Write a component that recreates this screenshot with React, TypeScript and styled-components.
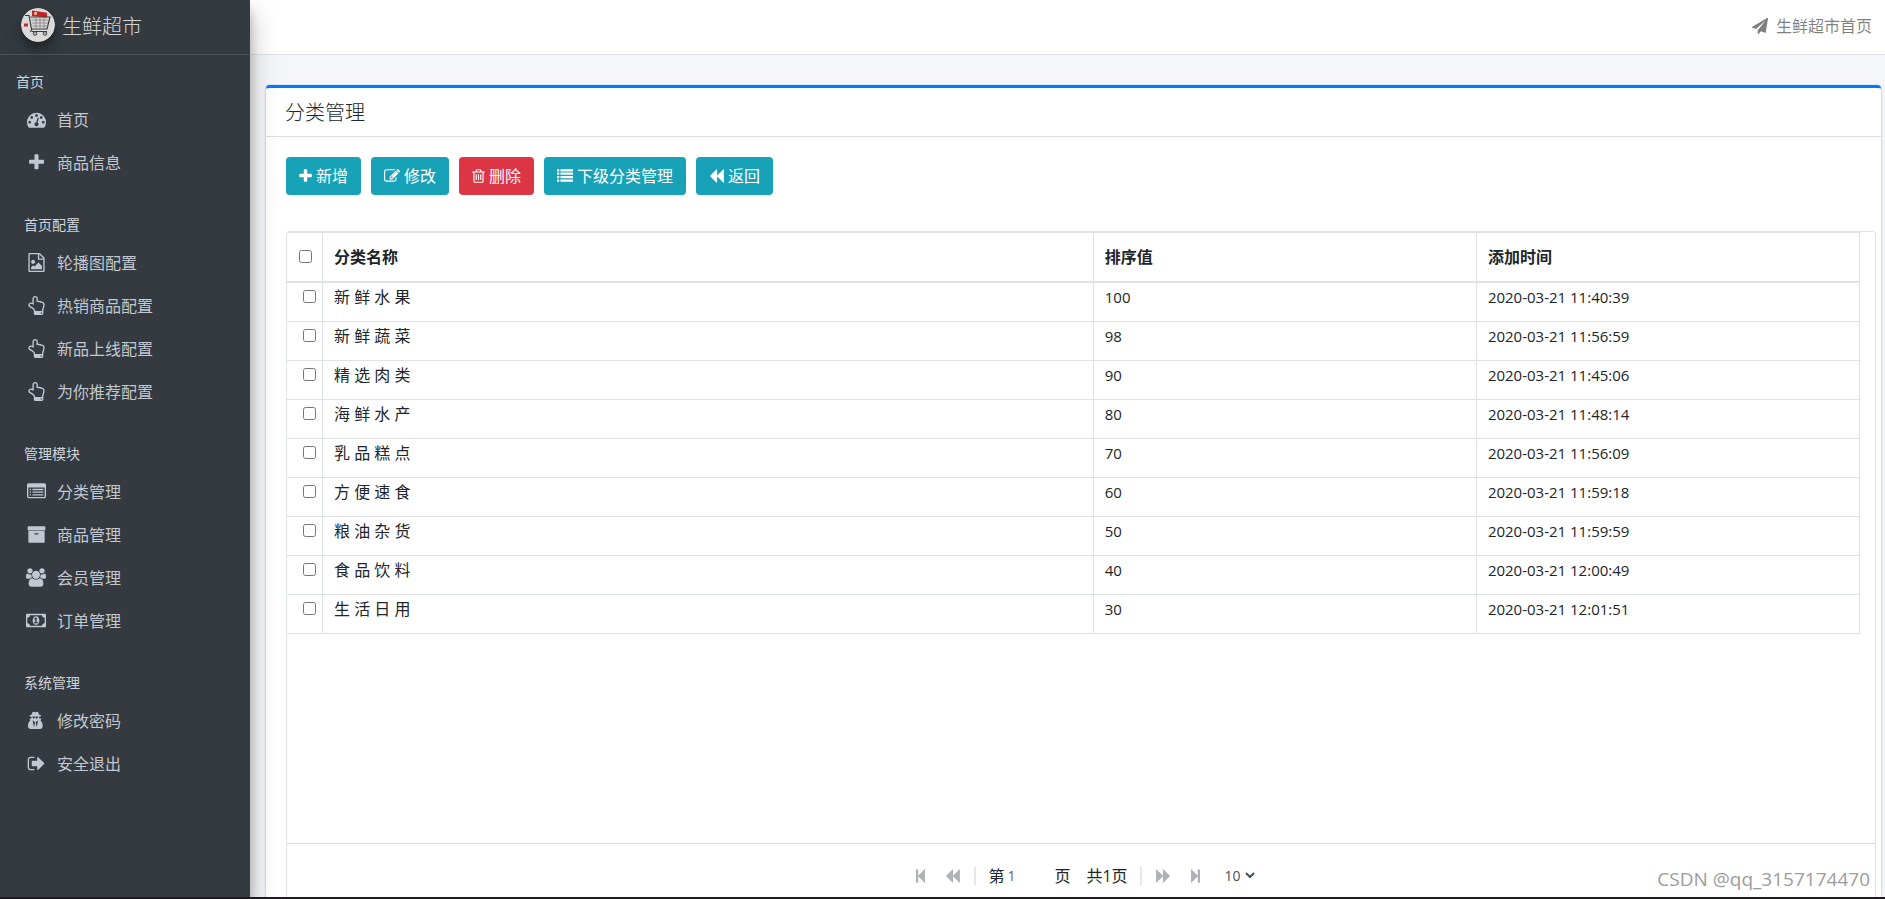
import React from 'react';
import styled, { createGlobalStyle } from 'styled-components';

const GlobalStyle = createGlobalStyle`
  *, *::before, *::after { box-sizing: border-box; }
  body {
    margin: 0;
    font-family: 'Open Sans', 'Noto Sans CJK SC', sans-serif;
    font-size: 16px;
    line-height: 24px;
    color: #212529;
    background: #f4f6f9;
  }
`;

/* ---------- icons ---------- */

type Shape = { w?: number; d: string };

const rows = (x: number, w: number, h: number, ys: number[]) =>
  ys.map((y) => `M${x} ${y}h${w}v${h}h-${w}z`).join('');

const shapes: Record<string, Shape> = {
  dashboard: {
    d: 'M384 1152q0-53-37.5-90.5t-90.5-37.5-90.5 37.5-37.5 90.5 37.5 90.5 90.5 37.5 90.5-37.5 37.5-90.5zm192-448q0-53-37.5-90.5t-90.5-37.5-90.5 37.5-37.5 90.5 37.5 90.5 90.5 37.5 90.5-37.5 37.5-90.5zm428 481l101-382q6-26-7.5-48.5t-38.5-29.5-48 6.5-30 39.5l-101 382q-60 5-107 43.5t-63 98.5q-20 77 20 146t117 89 146-20 89-117q16-60-6-117t-72-91zm660-33q0-53-37.5-90.5t-90.5-37.5-90.5 37.5-37.5 90.5 37.5 90.5 90.5 37.5 90.5-37.5 37.5-90.5zm-640-640q0-53-37.5-90.5t-90.5-37.5-90.5 37.5-37.5 90.5 37.5 90.5 90.5 37.5 90.5-37.5 37.5-90.5zm448 192q0-53-37.5-90.5t-90.5-37.5-90.5 37.5-37.5 90.5 37.5 90.5 90.5 37.5 90.5-37.5 37.5-90.5zm320 448q0 261-141 483-19 29-54 29h-1402q-35 0-54-29-141-221-141-483 0-182 71-348t191-286 286-191 348-71 348 71 286 191 191 286 71 348z',
  },
  plus: {
    w: 1408,
    d: 'M1408 736v192q0 40-28 68t-68 28h-416v416q0 40-28 68t-68 28h-192q-40 0-68-28t-28-68v-416h-416q-40 0-68-28t-28-68v-192q0-40 28-68t68-28h416v-416q0-40 28-68t68-28h192q40 0 68 28t28 68v416h416q40 0 68 28t28 68z',
  },
  fileImage: {
    d: 'M1596 380q28 28 48 76t20 88v1152q0 40-28 68t-68 28h-1344q-40 0-68-28t-28-68v-1600q0-40 28-68t68-28h896q40 0 88 20t76 48zm-444-244v376h376q-10-29-22-41l-313-313q-12-12-41-22zm384 1528v-1024h-416q-40 0-68-28t-28-68v-416h-768v1536h1280zm-128-448v320h-1024v-192l192-192 128 128 384-384zm-832-192q-80 0-136-56t-56-136 56-136 136-56 136 56 56 136-56 136-136 56z',
  },
  hand: {
    d: 'M1408 1600q0-26-19-45t-45-19-45 19-19 45 19 45 45 19 45-19 19-45zm128-764q0-189-167-189-26 0-56 5-16-30-52.5-47.5t-73.5-17.5-69 18q-50-53-119-53-25 0-55.5 10t-47.5 25v-331q0-52-38-90t-90-38q-51 0-89.5 39t-38.5 89v576q-20 0-48.5-15t-55-33-68-33-84.5-15q-67 0-97.5 44.5t-30.5 115.5q0 24 139 90 44 24 65 37 64 40 145 112 81 71 106 101 57 69 57 140v32h640v-32q0-72 32-167t64-193.5 32-179.5zm128-5q0 133-69 322-59 164-59 223v288q0 53-37.5 90.5t-90.5 37.5h-640q-53 0-90.5-37.5t-37.5-90.5v-288q0-10-4.5-21.5t-14-23.5-18-22.5-22.5-24-21.5-20.5-21.5-19-17-14q-74-65-129-100-21-13-62-33t-72-37-63-40.5-49.5-55-17.5-69.5q0-125 67-206.5t189-81.5q68 0 128 22v-374q0-104 77-180t179-76q105 0 181 75.5t76 180.5v169q62 4 119 37 21-3 43-3 101 0 178 60 139-1 219.5 85t80.5 227z',
  },
  listAlt: {
    d:
      rows(256, 128, 128, [640, 896, 1152]) +
      rows(512, 1024, 128, [640, 896, 1152]) +
      'M1664 1376v-832q0-13-9.5-22.5t-22.5-9.5h-1472q-13 0-22.5 9.5t-9.5 22.5v832q0 13 9.5 22.5t22.5 9.5h1472q13 0 22.5-9.5t9.5-22.5zm128-1088v1088q0 66-47 113t-113 47h-1472q-66 0-113-47t-47-113v-1088q0-66 47-113t113-47h1472q66 0 113 47t47 113z',
  },
  archive: {
    d: 'M1088 832q0-26-19-45t-45-19h-256q-26 0-45 19t-19 45 19 45 45 19h256q26 0 45-19t19-45zm576-192v960q0 26-19 45t-45 19h-1408q-26 0-45-19t-19-45v-960q0-26 19-45t45-19h1408q26 0 45 19t19 45zm64-448v256q0 26-19 45t-45 19h-1536q-26 0-45-19t-19-45v-256q0-26 19-45t45-19h1536q26 0 45 19t19 45z',
  },
  users: {
    w: 1920,
    d: 'M593 896q-162 5-265 128h-134q-82 0-138-40.5t-56-118.5q0-353 124-353 6 0 43.5 21t97.5 42.5 119 21.5q67 0 133-23-5 37-5 66 0 139 81 256zm1071 637q0 120-73 189.5t-194 69.5h-874q-121 0-194-69.5t-73-189.5q0-53 3.5-103.5t14-109 26.5-108.5 43-97.5 62-81 85.5-53.5 111.5-20q10 0 43 21.5t73 48 107 48 135 21.5 135-21.5 107-48 73-48 43-21.5q61 0 111.5 20t85.5 53.5 62 81 43 97.5 26.5 108.5 14 109 3.5 103.5zm-1024-1277q0 106-75 181t-181 75-181-75-75-181 75-181 181-75 181 75 75 181zm704 384q0 159-112.5 271.5t-271.5 112.5-271.5-112.5-112.5-271.5 112.5-271.5 271.5-112.5 271.5 112.5 112.5 271.5zm576 225q0 78-56 118.5t-138 40.5h-134q-103-123-265-128 81-117 81-256 0-29-5-66 66 23 133 23 59 0 119-21.5t97.5-42.5 43.5-21q124 0 124 353zm-128-609q0 106-75 181t-181 75-181-75-75-181 75-181 181-75 181 75 75 181z',
  },
  money: {
    w: 1920,
    d: 'M768 1152h384v-96h-128v-448h-114l-148 137 77 80q42-37 55-57h2v288h-128v96zm512-256q0 70-21 142t-59.5 134-101.5 101-138 39-138-39-101.5-101-59.5-134-21-142 21-142 59.5-134 101.5-101 138-39 138 39 101.5 101 59.5 134 21 142zm512 256v-512q-106 0-181-75t-75-181h-1152q0 106-75 181t-181 75v512q106 0 181 75t75 181h1152q0-106 75-181t181-75zm128-832v1152q0 26-19 45t-45 19h-1792q-26 0-45-19t-19-45v-1152q0-26 19-45t45-19h1792q26 0 45 19t19 45z',
  },
  userSecret: {
    w: 1536,
    d: 'M576 1536l96-448-96-128-128-64zM832 1536l128-640-128 64-96 128zM992 526q-2-4-4-6-10-8-96-8-70 0-167 19-7 2-21 2t-21-2q-97-19-167-19-86 0-96 8-2 2-4 6 2 18 4 27 2 3 7.5 6.5t7.5 10.5q2 4 7.5 20.5t7 20.5 7.5 17 8.5 17 9 14 12 13.5 14 9.5 17.5 8 20.5 4 24.5 2q36 0 59-12.5t32.5-30 14.5-34.5 11.5-29.5 17.5-12.5h12q11 0 17.5 12.5t11.5 29.5 14.5 34.5 32.5 30 59 12.5q13 0 24.5-2t20.5-4 17.5-8 14-9.5 12-13.5 9-14 8.5-17 7.5-17 7-20.5 7.5-20.5q2-7 7.5-10.5t7.5-6.5q2-9 4-27zM1408 1459q0 121-73 190t-194 69h-874q-121 0-194-69t-73-190q0-61 4.5-118t19-125.5 37.5-123.5 63.5-103.5 93.5-74.5l-90-220h214q-22-64-22-128 0-12 2-32-194-40-194-96 0-57 210-99 17-62 51.5-134t70.5-114q32-37 76-37 30 0 84 31t84 31 84-31 84-31q44 0 76 37 36 42 70.5 114t51.5 134q210 42 210 99 0 56-194 96 7 81-20 160h214l-82 225q63 33 107.5 96.5t65.5 143.5 29 151.5 8 148.5z',
  },
  signOut: {
    d: 'M704 1440q0 4 1 20t.5 26.5-3 23.5-10 19.5-20.5 6.5h-320q-119 0-203.5-84.5t-84.5-203.5v-704q0-119 84.5-203.5t203.5-84.5h320q13 0 22.5 9.5t9.5 22.5q0 4 1 20t.5 26.5-3 23.5-10 19.5-20.5 6.5h-320q-66 0-113 47t-47 113v704q0 66 47 113t113 47h312l11.5 1 11.5 3 8 5.5 7 9 2 13.5zm928-544q0 26-19 45l-544 544q-19 19-45 19t-45-19-19-45v-288h-448q-26 0-45-19t-19-45v-384q0-26 19-45t45-19h448v-288q0-26 19-45t45-19 45 19l544 544q19 19 19 45z',
  },
  edit: {
    d: 'M888 1184l116-116-152-152-116 116v56h96v96h56zm440-720q-16-16-33 1l-350 350q-17 17-1 33t33-1l350-350q17-17 1-33zm80 594v190q0 119-84.5 203.5t-203.5 84.5h-832q-119 0-203.5-84.5t-84.5-203.5v-832q0-119 84.5-203.5t203.5-84.5h832q63 0 117 25 15 7 18 23 3 17-9 29l-49 49q-14 14-32 8-23-6-45-6h-832q-66 0-113 47t-47 113v832q0 66 47 113t113 47h832q66 0 113-47t47-113v-126q0-13 9-22l64-64q15-15 35-7t20 29zm-96-738l288 288-672 672h-288v-288zm444 132l-92 92-288-288 92-92q28-28 68-28t68 28l152 152q28 28 28 68t-28 68z',
  },
  trash: {
    w: 1408,
    d:
      rows(384, 128, 640, [704]) +
      rows(640, 128, 640, [704]) +
      rows(896, 128, 640, [704]) +
      'M1152 1460v-948h-896v948q0 22 7 40.5t14.5 27 10.5 8.5h832q3 0 10.5-8.5t14.5-27 7-40.5zm-672-1076h448l-48-117q-7-9-17-11h-317q-10 2-17 11zm928 32v64q0 14-9 23t-23 9h-96v948q0 83-47 143.5t-113 60.5h-832q-66 0-113-58.5t-47-141.5v-952h-96q-14 0-23-9t-9-23v-64q0-14 9-23t23-9h309l70-167q15-37 54-63t79-26h320q40 0 79 26t54 63l70 167h309q14 0 23 9t9 23z',
  },
  list: {
    d: rows(0, 256, 256, [128, 512, 896, 1280]) + rows(384, 1408, 256, [128, 512, 896, 1280]),
  },
  backward: {
    w: 1664,
    d: 'M1619 141q19-19 32-13t13 32v1472q0 26-13 32t-32-13l-710-710q-9-9-13-19v710q0 26-13 32t-32-13l-710-710q-19-19-19-45t19-45l710-710q19-19 32-13t13 32v710q4-10 13-19z',
  },
  forward: {
    w: 1664,
    d: 'M45 1651q-19 19-32 13t-13-32v-1472q0-26 13-32t32 13l710 710q9 9 13 19v-710q0-26 13-32t32 13l710 710q19 19 19 45t-19 45l-710 710q-19 19-32 13t-13-32v-710q-4 10-13 19z',
  },
  stepBackward: {
    w: 1024,
    d: 'M979 141q19-19 32-13t13 32v1472q0 26-13 32t-32-13l-710-710q-9-9-13-19v678q0 26-19 45t-45 19h-128q-26 0-45-19t-19-45v-1408q0-26 19-45t45-19h128q26 0 45 19t19 45v678q4-10 13-19z',
  },
  stepForward: {
    w: 1024,
    d: 'M45 1651q-19 19-32 13t-13-32v-1472q0-26 13-32t32 13l710 710q9 9 13 19v-678q0-26 19-45t45-19h128q26 0 45 19t19 45v1408q0 26-19 45t-45 19h-128q-26 0-45-19t-19-45v-678q-4 10-13 19z',
  },
  plane: {
    d: 'M1764 11q33 24 27 64l-256 1536q-5 29-32 45-14 8-31 8-11 0-24-5l-453-185-242 295q-18 23-49 23-13 0-22-4-19-7-30.5-23.5t-11.5-36.5v-349l864-1059-1069 925-395-162q-37-14-40-55-2-40 32-59l1664-960q15-9 32-9 20 0 36 11z',
  },
};

const Glyph = styled.svg`
  display: block;
  flex: none;
  fill: currentColor;
  overflow: visible;
`;

function Icon({ name, size = 16 }: { name: string; size?: number }) {
  const { w = 1792, d } = shapes[name];
  return (
    <Glyph
      width={Math.round((size * w) / 1792)}
      height={size}
      viewBox={`0 0 ${w} 1792`}
      aria-hidden="true"
    >
      <path d={d} />
    </Glyph>
  );
}

/* ---------- shell ---------- */

const Screen = styled.div`
  display: flex;
  flex-direction: column;
  height: 100vh;
  overflow: hidden;
  position: relative;
`;

const Shell = styled.div`
  display: flex;
  flex: 1;
  min-height: 0;
`;

const DesktopEdge = styled.div`
  position: relative;
  z-index: 3;
  flex: none;
  height: 2px;
  background: #1d1b20;
`;

const Sidebar = styled.aside`
  position: relative;
  z-index: 2;
  flex: none;
  width: 250px;
  color: #c2c7d0;
  background: #343a40;
  box-shadow: 0 14px 28px rgba(0, 0, 0, 0.25), 0 10px 10px rgba(0, 0, 0, 0.22);
`;

const Brand = styled.a`
  display: flex;
  align-items: center;
  gap: 7px;
  height: 55px;
  padding: 0 8px 4px 21px;
  border-bottom: 1px solid #4b545c;
  color: rgba(255, 255, 255, 0.8);
  font-size: 20px;
  font-weight: 300;
  text-decoration: none;
`;

const BrandName = styled.span`
  padding-top: 4px;
`;

const Logo = styled.svg`
  display: block;
  flex: none;
  border-radius: 50%;
  box-shadow: 0 10px 20px rgba(0, 0, 0, 0.19), 0 6px 6px rgba(0, 0, 0, 0.23);
`;

const Nav = styled.nav`
  padding-top: 9px;
`;

const NavSection = styled.section`
  margin-bottom: 24px;
`;

const NavHeading = styled.h2<{ $outer?: boolean }>`
  margin: 0;
  padding-left: ${(p) => (p.$outer ? 16 : 24)}px;
  font-size: 14px;
  font-weight: 400;
  line-height: 36px;
  color: #d0d4db;
`;

const NavList = styled.ul`
  margin: 0;
  padding: 0 8px;
  list-style: none;
`;

const NavLink = styled.a`
  display: flex;
  align-items: center;
  gap: 9px;
  height: 40px;
  margin-bottom: 3px;
  padding: 0 16px;
  color: #c2c7d0;
  text-decoration: none;
`;

const NavIcon = styled.span`
  display: flex;
  justify-content: center;
  width: 24px;
  padding-bottom: 2px;
`;

const Main = styled.main`
  display: flex;
  flex: 1;
  flex-direction: column;
  min-width: 0;
`;

const Navbar = styled.header`
  display: flex;
  flex: none;
  align-items: center;
  justify-content: flex-end;
  height: 55px;
  padding: 0 13px 2px;
  background: #fff;
  border-bottom: 1px solid #dee2e6;
`;

const HomeLink = styled.a`
  display: flex;
  align-items: center;
  gap: 8px;
  color: rgba(0, 0, 0, 0.5);
  text-decoration: none;
`;

/* ---------- card ---------- */

const Card = styled.section`
  display: flex;
  flex: 1;
  flex-direction: column;
  min-height: 0;
  margin: 30px 4px 0 16px;
  background: #fff;
  border-top: 3px solid #007bff;
  border-radius: 4px 4px 0 0;
  box-shadow: 0 0 1px rgba(0, 0, 0, 0.4), 0 1px 3px rgba(0, 0, 0, 0.2);
`;

const CardTitle = styled.h1`
  margin: 0;
  padding: 2px 19px 0;
  border-bottom: 1px solid #dfdfdf;
  font-size: 20px;
  font-weight: 300;
  line-height: 46px;
`;

const CardBody = styled.div`
  display: flex;
  flex: 1;
  flex-direction: column;
  gap: 36px;
  min-height: 0;
  padding: 20px 5px 0 20px;
`;

const Toolbar = styled.div`
  display: flex;
  gap: 10px;
`;

const ToolButton = styled.button<{ $danger?: boolean }>`
  display: flex;
  align-items: center;
  gap: 4px;
  height: 38px;
  padding: 0 13px;
  border: 0;
  border-radius: 4px;
  color: #fff;
  background: ${(p) => (p.$danger ? '#dc3545' : '#17a2b8')};
  font: inherit;
  cursor: pointer;
`;

const Grid = styled.div`
  display: flex;
  flex: 1;
  flex-direction: column;
  min-height: 0;
  border: 1px solid #dee2e6;
  border-bottom: 0;
  border-radius: 4px 4px 0 0;
`;

const GridScroll = styled.div`
  flex: 1;
  min-height: 0;
  padding-right: 15px;
  overflow: hidden;
`;

const Table = styled.table`
  width: 100%;
  table-layout: fixed;
  border-collapse: separate;
  border-spacing: 0;
  border-top: 1px solid #dee2e6;
`;

const CheckCol = styled.col`
  width: 36px;
`;

const NameCol = styled.col`
  width: 49%;
`;

const HeadCell = styled.th`
  height: 50px;
  padding: 0 11px;
  border-right: 1px solid #dee2e6;
  border-bottom: 2px solid #dee2e6;
  font-weight: 700;
  text-align: left;
`;

const Cell = styled.td<{ $latin?: boolean }>`
  height: 39px;
  padding: 2px 11px 0;
  border-right: 1px solid #dee2e6;
  border-bottom: 1px solid #dee2e6;
  font-size: ${(p) => (p.$latin ? 15 : 16)}px;
  vertical-align: top;
`;

const HeadCheckCell = styled(HeadCell)`
  padding: 0 0 2px 12px;
`;

const CheckCell = styled(Cell)`
  padding: 7px 0 0 16px;
`;

const Check = styled.input`
  display: block;
  width: 13px;
  height: 13px;
  margin: 0;
`;

/* ---------- pager ---------- */

const Pager = styled.footer`
  display: flex;
  flex: none;
  align-items: center;
  justify-content: center;
  height: 54px;
  padding-top: 10px;
  border-top: 1px solid #d9dbdd;
`;

const PagerButton = styled.button`
  display: flex;
  justify-content: center;
  width: 32px;
  padding: 0;
  border: 0;
  color: #b0b2b4;
  background: none;
`;

const Divider = styled.span<{ $end?: boolean }>`
  width: 2px;
  height: 18px;
  margin: ${(p) => (p.$end ? '0 6px 0 12px' : '0 12px 0 6px')};
  background: #e6e6e6;
`;

const PageLabel = styled.label`
  display: flex;
  align-items: center;
  gap: 3px;
`;

const PageInput = styled.input`
  width: 44px;
  padding: 0;
  border: 0;
  color: #5f6368;
  background: none;
  font: inherit;
  font-size: 14px;
`;

const PageTotal = styled.span`
  margin-left: 16px;
`;

const PageSize = styled.select`
  margin-left: 9px;
  border: 0;
  color: #495057;
  background: none;
  font: inherit;
  font-size: 14px;
`;

const Watermark = styled.div`
  position: absolute;
  right: 15px;
  bottom: 8px;
  z-index: 4;
  color: #9c9c9c;
  font-size: 19px;
  text-shadow: 1px 1px 0 #fff;
  pointer-events: none;
`;

/* ---------- data ---------- */

const menu = [
  {
    title: '首页',
    outer: true,
    items: [
      ['dashboard', '首页'],
      ['plus', '商品信息'],
    ],
  },
  {
    title: '首页配置',
    items: [
      ['fileImage', '轮播图配置'],
      ['hand', '热销商品配置'],
      ['hand', '新品上线配置'],
      ['hand', '为你推荐配置'],
    ],
  },
  {
    title: '管理模块',
    items: [
      ['listAlt', '分类管理'],
      ['archive', '商品管理'],
      ['users', '会员管理'],
      ['money', '订单管理'],
    ],
  },
  {
    title: '系统管理',
    items: [
      ['userSecret', '修改密码'],
      ['signOut', '安全退出'],
    ],
  },
];

const actions = [
  { icon: 'plus', label: '新增' },
  { icon: 'edit', label: '修改' },
  { icon: 'trash', label: '删除', danger: true },
  { icon: 'list', label: '下级分类管理' },
  { icon: 'backward', label: '返回' },
];

const categories = [
  ['新 鲜 水 果', '100', '2020-03-21 11:40:39'],
  ['新 鲜 蔬 菜', '98', '2020-03-21 11:56:59'],
  ['精 选 肉 类', '90', '2020-03-21 11:45:06'],
  ['海 鲜 水 产', '80', '2020-03-21 11:48:14'],
  ['乳 品 糕 点', '70', '2020-03-21 11:56:09'],
  ['方 便 速 食', '60', '2020-03-21 11:59:18'],
  ['粮 油 杂 货', '50', '2020-03-21 11:59:59'],
  ['食 品 饮 料', '40', '2020-03-21 12:00:49'],
  ['生 活 日 用', '30', '2020-03-21 12:01:51'],
];

function CartLogo() {
  return (
    <Logo width="34" height="34" viewBox="0 0 34 34" aria-hidden="true">
      <circle cx="17" cy="17" r="17" fill="#d9d9d9" />
      <path d="M11 2.5l15 2.2v4.8l-15-1.6z" fill="#c9201f" />
      <circle cx="14.5" cy="5.4" r="1.6" fill="#e9b9b6" />
      <path d="M3 15.5h4v3h-4z" fill="#cc2a2a" />
      <path
        d="M4 7.5h4l2.5 13.5h15.5l3-12h-19.5M11 23.5h15M11 21l-1.5 3"
        fill="none"
        stroke="#3a3a3a"
        strokeWidth="1.2"
      />
      <path
        d="M10.5 12h17M11 15h16M11.500 18h15M15 10v10M19 10v10M23 10v10"
        fill="none"
        stroke="#8f8f8f"
      />
      <circle cx="14" cy="25.5" r="1.8" fill="#bbb" stroke="#444" />
      <circle cx="24" cy="25.5" r="1.8" fill="#bbb" stroke="#444" />
    </Logo>
  );
}

export default function App() {
  return (
    <>
      <GlobalStyle />
      <Screen>
        <Shell>
          <Sidebar>
            <Brand href="#">
              <CartLogo />
              <BrandName>生鲜超市</BrandName>
            </Brand>
            <Nav>
              {menu.map((section) => (
                <NavSection key={section.title}>
                  <NavHeading $outer={section.outer}>{section.title}</NavHeading>
                  <NavList>
                    {section.items.map(([icon, label]) => (
                      <li key={label}>
                        <NavLink href="#">
                          <NavIcon>
                            <Icon name={icon} size={19} />
                          </NavIcon>
                          {label}
                        </NavLink>
                      </li>
                    ))}
                  </NavList>
                </NavSection>
              ))}
            </Nav>
          </Sidebar>

          <Main>
            <Navbar>
              <HomeLink href="#">
                <Icon name="plane" />
                生鲜超市首页
              </HomeLink>
            </Navbar>

            <Card>
              <CardTitle>分类管理</CardTitle>
              <CardBody>
                <Toolbar>
                  {actions.map((a) => (
                    <ToolButton key={a.label} type="button" $danger={a.danger}>
                      <Icon name={a.icon} />
                      {a.label}
                    </ToolButton>
                  ))}
                </Toolbar>

                <Grid>
                  <GridScroll>
                    <Table>
                      <colgroup>
                        <CheckCol />
                        <NameCol />
                        <col />
                        <col />
                      </colgroup>
                      <thead>
                        <tr>
                          <HeadCheckCell>
                            <Check type="checkbox" aria-label="全选" />
                          </HeadCheckCell>
                          <HeadCell>分类名称</HeadCell>
                          <HeadCell>排序值</HeadCell>
                          <HeadCell>添加时间</HeadCell>
                        </tr>
                      </thead>
                      <tbody>
                        {categories.map(([name, rank, time]) => (
                          <tr key={name}>
                            <CheckCell>
                              <Check type="checkbox" aria-label={name} />
                            </CheckCell>
                            <Cell>{name}</Cell>
                            <Cell $latin>{rank}</Cell>
                            <Cell $latin>{time}</Cell>
                          </tr>
                        ))}
                      </tbody>
                    </Table>
                  </GridScroll>

                  <Pager>
                    <PagerButton type="button" aria-label="首页">
                      <Icon name="stepBackward" />
                    </PagerButton>
                    <PagerButton type="button" aria-label="上一页">
                      <Icon name="backward" />
                    </PagerButton>
                    <Divider />
                    <PageLabel>
                      第
                      <PageInput type="text" defaultValue="1" />
                      页
                    </PageLabel>
                    <PageTotal>共1页</PageTotal>
                    <Divider $end />
                    <PagerButton type="button" aria-label="下一页">
                      <Icon name="forward" />
                    </PagerButton>
                    <PagerButton type="button" aria-label="末页">
                      <Icon name="stepForward" />
                    </PagerButton>
                    <PageSize aria-label="每页条数" defaultValue="10">
                      <option>10</option>
                      <option>20</option>
                      <option>50</option>
                    </PageSize>
                  </Pager>
                </Grid>
              </CardBody>
            </Card>
          </Main>
        </Shell>
        <DesktopEdge />
        <Watermark>CSDN @qq_3157174470</Watermark>
      </Screen>
    </>
  );
}
